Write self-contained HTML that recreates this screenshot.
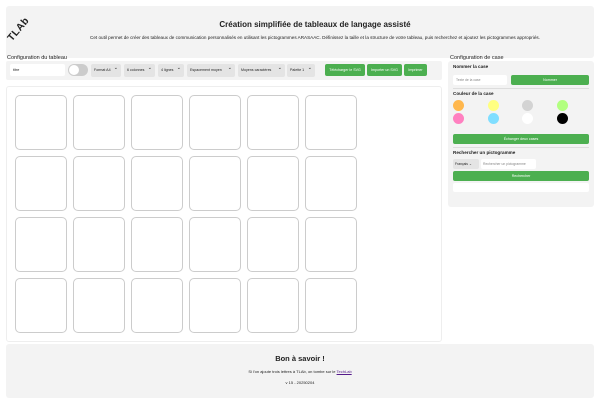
<!DOCTYPE html>
<html><head><meta charset="utf-8"><style>
*{box-sizing:border-box;margin:0;padding:0}
body{width:600px;height:413px;background:#fff;font-family:"Liberation Sans",sans-serif;position:relative;overflow:hidden;color:#222}
.abs{position:absolute}
.hdr{left:6px;top:6px;width:588px;height:52px;background:#f3f3f3;border-radius:3px}
.logo{left:5px;top:24px;font-weight:bold;font-size:10px;transform:rotate(-50deg);letter-spacing:0.5px}
.sel{position:absolute;top:64px;height:13px;background:#e4e4e4;border-radius:2px;font-size:3.6px;line-height:13px;padding-left:3px}
.sel:after{content:"⌄";position:absolute;right:3px;top:-2px;font-size:5px}
.btn{position:absolute;background:#4caf50;color:#fff;font-size:3.6px;text-align:center;border-radius:2px}
.cell{position:absolute;width:52px;height:55px;border:1px solid #ccc;border-radius:5px;background:#fff}
.dot{position:absolute;width:11px;height:11px;border-radius:50%}
</style></head><body>
<div class="abs hdr"></div>
<div class="abs logo">TLAb</div>
<div class="abs" style="left:0;width:600px;top:20px;text-align:center;font-weight:bold;font-size:8px;padding-left:30px">Création simplifiée de tableaux de langage assisté</div>
<div class="abs" style="left:0;width:600px;top:35px;text-align:center;font-size:4.6px;padding-left:30px">Cet outil permet de créer des tableaux de communication personnalisés en utilisant les pictogrammes ARASAAC. Définissez la taille et la structure de votre tableau, puis recherchez et ajoutez les pictogrammes appropriés.</div>

<div class="abs" style="left:7px;top:55px;font-size:5.5px">Configuration du tableau</div>
<div class="abs" style="left:6px;top:61px;width:436px;height:19px;background:#f3f3f3;border-radius:2px"></div>
<div class="abs" style="left:10px;top:64px;width:55px;height:12px;background:#fff;border-radius:2px;font-size:3.8px;line-height:12px;padding-left:3px">titre</div>
<div class="abs" style="left:68px;top:64px;width:20px;height:12px;background:#ccc;border-radius:6px"><div style="position:absolute;left:1px;top:1px;width:10px;height:10px;border-radius:50%;background:#fff"></div></div>
<div class="sel" style="left:91px;width:30px">Format A4</div>
<div class="sel" style="left:124px;width:31px">6 colonnes</div>
<div class="sel" style="left:158px;width:26px">4 lignes</div>
<div class="sel" style="left:187px;width:48px">Espacement moyen</div>
<div class="sel" style="left:238px;width:47px">Moyens caractères</div>
<div class="sel" style="left:287px;width:28px">Palette 1</div>
<div class="btn" style="left:325px;top:64px;width:40px;height:12px;line-height:12px">Télécharger le SVG</div>
<div class="btn" style="left:367px;top:64px;width:35px;height:12px;line-height:12px">Importer un SVG</div>
<div class="btn" style="left:404px;top:64px;width:23px;height:12px;line-height:12px">Imprimer</div>

<div class="abs" style="left:6px;top:86px;width:436px;height:256px;border:1px solid #eee;border-radius:3px"></div>
<div id="g"></div>
<script>
var h='';for(var r=0;r<4;r++)for(var c=0;c<6;c++)h+='<div class="cell" style="left:'+(15+c*58)+'px;top:'+(95+r*61)+'px"></div>';document.getElementById('g').outerHTML=h;
</script>

<div class="abs" style="left:450px;top:55px;font-size:5.5px">Configuration de case</div>
<div class="abs" style="left:448px;top:61px;width:146px;height:146px;background:#f3f3f3;border-radius:3px"></div>
<div class="abs" style="left:453px;top:64px;font-size:4.6px;font-weight:bold">Nommer la case</div>
<div class="abs" style="left:453px;top:75px;width:54px;height:10px;background:#fff;border-radius:2px;font-size:3.4px;line-height:10px;padding-left:3px;color:#888">Texte de la case</div>
<div class="btn" style="left:511px;top:75px;width:78px;height:10px;line-height:10px">Nommer</div>
<div class="abs" style="left:453px;top:88px;width:136px;height:1px;background:#ddd"></div>
<div class="abs" style="left:453px;top:91px;font-size:4.6px;font-weight:bold">Couleur de la case</div>
<div class="dot" style="left:453px;top:100px;background:#ffb74d"></div>
<div class="dot" style="left:488px;top:100px;background:#ffff80"></div>
<div class="dot" style="left:522px;top:100px;background:#d3d3d3"></div>
<div class="dot" style="left:557px;top:100px;background:#b2ff80"></div>
<div class="dot" style="left:453px;top:113px;background:#ff80c0"></div>
<div class="dot" style="left:488px;top:113px;background:#80deff"></div>
<div class="dot" style="left:522px;top:113px;background:#fff"></div>
<div class="dot" style="left:557px;top:113px;background:#000"></div>
<div class="btn" style="left:453px;top:134px;width:136px;height:10px;line-height:10px">Échanger deux cases</div>
<div class="abs" style="left:453px;top:147px;width:136px;height:1px;background:#ddd"></div>
<div class="abs" style="left:453px;top:150px;font-size:4.6px;font-weight:bold">Rechercher un pictogramme</div>
<div class="abs" style="left:453px;top:159px;width:26px;height:10px;background:#e4e4e4;border-radius:2px;font-size:3.4px;line-height:10px;padding-left:2px">Français ⌄</div>
<div class="abs" style="left:481px;top:159px;width:55px;height:10px;background:#fff;border-radius:2px;font-size:3.4px;line-height:10px;padding-left:2px;color:#888">Rechercher un pictogramme</div>
<div class="btn" style="left:453px;top:171px;width:136px;height:10px;line-height:10px">Rechercher</div>
<div class="abs" style="left:453px;top:183px;width:136px;height:9px;background:#fff;border-radius:2px"></div>

<div class="abs" style="left:6px;top:344px;width:588px;height:54px;background:#f3f3f3;border-radius:3px"></div>
<div class="abs" style="left:6px;width:588px;top:354px;text-align:center;font-weight:bold;font-size:7.5px">Bon à savoir !</div>
<div class="abs" style="left:6px;width:588px;top:369px;text-align:center;font-size:4px">Si l'on ajoute trois lettres à TLAb, on tombe sur le <span style="color:#551a8b;text-decoration:underline">TechLab</span></div>
<div class="abs" style="left:6px;width:588px;top:380px;text-align:center;font-size:4px">v 15 - 20250204</div>
</body></html>
